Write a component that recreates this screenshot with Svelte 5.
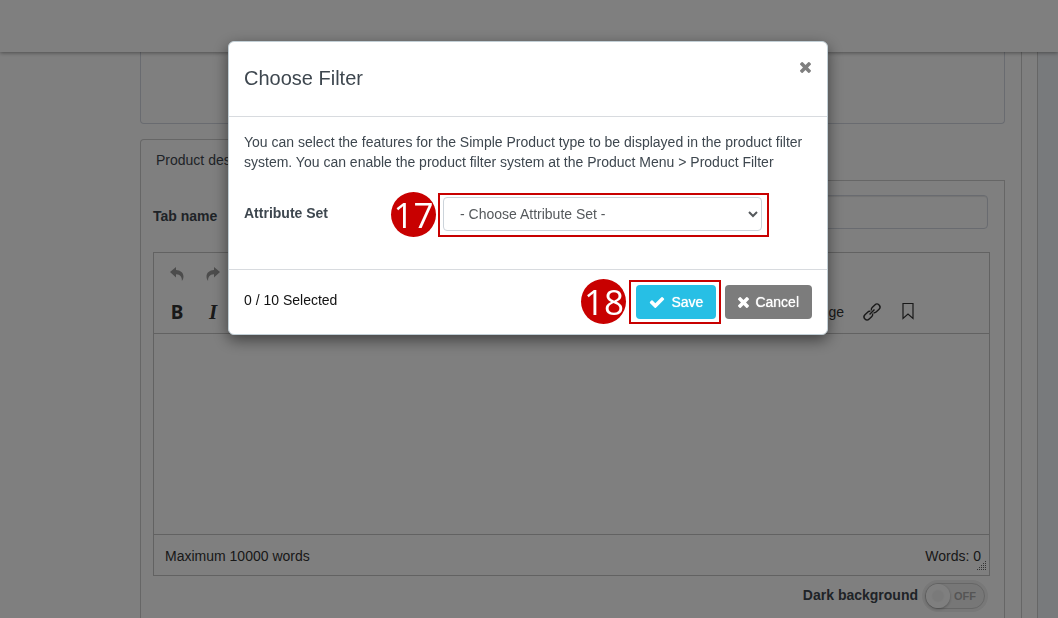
<script>
  let attributeSet = $state('');
  let tabName = $state('');
  let description = $state('');
  let dark = $state(false);
  let selected = $state(0);
  const limit = 10;
  const maxWords = 10000;
  const words = $derived(description.trim() ? description.trim().split(/\s+/).length : 0);
</script>

{#snippet times()}
  <svg class="times" viewBox="302 366 1188 1188" aria-hidden="true"><path fill="currentColor" d="M1490 1322q0 40-28 68l-136 136q-28 28-68 28t-68-28l-294-294-294 294q-28 28-68 28t-68-28l-136-136q-28-28-28-68t28-68l294-294-294-294q-28-28-28-68t28-68l136-136q28-28 68-28t68 28l294 294 294-294q28-28 68-28t68 28l136 136q28 28 28 68t-28 68l-294 294 294 294q28 28 28 68z"/></svg>
{/snippet}

{#snippet turn()}
  <path fill="currentColor" d="M0 5L6 0v3c4.500.2 7.500 2.700 7.500 6.500 0 1.800-.6 3.300-1.600 4.500C12 10 10.500 7.500 6 7.300V10.500z"/>
{/snippet}

<div class="page">
  <header class="topbar"></header>
  <main class="sheet">
    <div class="content">
      <section class="summary"></section>
      <nav class="tabs"><button class="tab">Product des</button></nav>
      <section class="panel">
        <div class="field">
          <label for="tab-name">Tab name</label>
          <input id="tab-name" type="text" bind:value={tabName} />
        </div>
        <div class="editor">
          <div class="toolbar">
            <div class="tools history">
              <button aria-label="Undo"><svg width="14" height="14" viewBox="0 0 14 14">{@render turn()}</svg></button>
              <button aria-label="Redo"><svg width="14" height="14" viewBox="0 0 14 14"><g transform="matrix(-1 0 0 1 14 0)">{@render turn()}</g></svg></button>
            </div>
            <div class="tools">
              <button class="bold">B</button>
              <button class="italic">I</button>
              <button class="image">ge</button>
              <button aria-label="Link">
                <svg width="18" height="18" viewBox="0 0 18 18" fill="none" stroke="currentColor" stroke-width="1.400">
                  <g transform="rotate(-45 9 9)"><path d="M8.300 7.500A2.800 2.800 0 0 0 5.800 6H2a3 3 0 0 0 0 6h3.800a2.800 2.800 0 0 0 2.500-1.500M9.700 7.500A2.800 2.800 0 0 1 12.200 6H16a3 3 0 0 1 0 6h-3.800a2.800 2.800 0 0 1-2.500-1.500M5.500 9h7"/></g>
                </svg>
              </button>
              <button aria-label="Anchor">
                <svg width="18" height="18" viewBox="0 0 18 18" fill="none" stroke="currentColor" stroke-width="1.200"><path d="M4 .5h10v15l-5-4.500-5 4.500z"/></svg>
              </button>
            </div>
          </div>
          <textarea aria-label="Description" bind:value={description}></textarea>
          <div class="status">
            <span>Maximum {maxWords} words</span>
            <span>Words: {words}</span>
            <svg class="grip" width="10" height="10" viewBox="0 0 10 10" aria-hidden="true" fill="#666">
              {#each [0, 1, 2, 3, 4] as row}
                {#each [0, 1, 2, 3, 4] as col}
                  {#if row + col >= 4}<rect x={col * 2} y={row * 2} width="1" height="1" />{/if}
                {/each}
              {/each}
            </svg>
          </div>
        </div>
        <div class="background-option">
          <label for="dark">Dark background</label>
          <span class="switch">
            <input id="dark" type="checkbox" role="switch" bind:checked={dark} />
            <span class="track"><span class="knob"></span>{dark ? 'ON' : 'OFF'}</span>
          </span>
        </div>
      </section>
    </div>
  </main>
</div>

<div class="backdrop">
  <div class="modal" role="dialog" aria-modal="true" aria-labelledby="dialog-title">
    <div class="modal-header">
      <h4 id="dialog-title">Choose Filter</h4>
      <button class="close" aria-label="Close">{@render times()}</button>
    </div>
    <div class="modal-body">
      <p>You can select the features for the Simple Product type to be displayed in the product filter system. You can enable the product filter system at the Product Menu &gt; Product Filter</p>
      <div class="row">
        <label for="attribute-set">Attribute Set</label>
        <div class="marked select-mark">
          <select id="attribute-set" bind:value={attributeSet}>
            <option value="">- Choose Attribute Set -</option>
          </select>
          <span class="step">17</span>
        </div>
      </div>
    </div>
    <div class="modal-footer">
      <span class="count">{selected} / {limit} Selected</span>
      <div class="marked save-mark">
        <button class="btn save">
          <svg width="16" height="11" viewBox="121 334 1550 1188" aria-hidden="true"><path fill="currentColor" d="M1671 566q0 40-28 68l-724 724-136 136q-28 28-68 28t-68-28l-136-136-362-362q-28-28-28-68t28-68l136-136q28-28 68-28t68 28l294 295 656-657q28-28 68-28t68 28l136 136q28 28 28 68z"/></svg>
          Save
        </button>
        <span class="step">18</span>
      </div>
      <button class="btn cancel">{@render times()}Cancel</button>
    </div>
  </div>
</div>

<style>
  :global(body) {
    margin: 0;
    overflow: hidden;
    background: #f1f4f8;
    color: #3e474f;
    font: 14px/20px "Liberation Sans", Arial, sans-serif;
  }
  * { box-sizing: border-box; }
  button, input, select, textarea { font: inherit; color: inherit; }
  svg { display: block; overflow: visible; }

  .page { display: flex; flex-direction: column; min-height: 100vh; }
  .topbar {
    height: 52px;
    background: #fff;
    box-shadow: 0 1px 4px rgba(0, 0, 0, 0.4);
    z-index: 1;
  }
  .sheet {
    flex: 1;
    margin-right: 20px;
    padding-right: 15px;
    background: #fff;
    border-right: 1px solid #ccc;
  }
  .content {
    height: 100%;
    padding: 0 16px 0 140px;
    border-right: 1px solid #ccc;
  }
  .summary {
    height: 72px;
    border: 1px solid #d2d7e0;
    border-top: 0;
    border-radius: 0 0 4px 4px;
  }
  .tabs { display: flex; margin-top: 15px; }
  .tab {
    width: 180px;
    height: 42px;
    margin-bottom: -1px;
    padding: 0 15px 2px;
    text-align: left;
    background: #fff;
    border: 1px solid #ccc;
    border-bottom: 0;
    border-radius: 4px 4px 0 0;
  }
  .panel { padding: 14px 14px 20px 12px; border: 1px solid #ccc; }
  .field { display: flex; align-items: center; padding-right: 2px; }
  .field label { width: 200px; padding-top: 8px; }
  .field label, .background-option label { font-weight: bold; }
  .field input {
    flex: 1;
    height: 34px;
    border: 1px solid #d2d7e0;
    border-radius: 4px;
    background: #fff;
    box-shadow: inset 0 1px 1px rgba(0, 0, 0, 0.1);
  }
  .editor { margin-top: 23px; border: 1px solid #c4c4c4; color: #333; }
  .toolbar { height: 81px; padding: 2px 5px; border-bottom: 1px solid #c4c4c4; }
  .tools { display: flex; align-items: center; height: 38px; }
  .tools button {
    display: flex;
    align-items: center;
    justify-content: center;
    width: 36px;
    height: 36px;
    padding: 0;
    background: none;
    border: 0;
  }
  .history { color: #999; }
  .tools .bold { font: bold 19px "Noto Sans", sans-serif; }
  .tools .italic { font: italic bold 21px "Liberation Serif", serif; }
  .tools .image { width: auto; margin-left: auto; padding-right: 10px; }
  .tools .image ~ button:last-child { margin-right: 58px; }
  textarea { display: block; width: 100%; height: 200px; padding: 10px; border: 0; resize: none; }
  .status {
    position: relative;
    display: flex;
    justify-content: space-between;
    padding: 11px 8px 9px 11px;
    border-top: 1px solid #c4c4c4;
  }
  .grip { position: absolute; right: 2px; bottom: 4px; }
  .background-option {
    display: flex;
    align-items: center;
    justify-content: flex-end;
    gap: 6px;
    margin-top: 6px;
    padding-right: 4px;
  }
  .background-option label { padding-bottom: 2px; }
  .switch {
    position: relative;
    padding: 1px;
    border-radius: 16px;
    background: #f0f0f0;
    box-shadow: 0 0 0 2px #f0f0f0;
  }
  .switch input { position: absolute; inset: 0; width: 100%; height: 100%; margin: 0; opacity: 0; }
  .track {
    display: flex;
    align-items: center;
    gap: 4px;
    width: 60px;
    height: 26px;
    border: 1px solid #ccc;
    border-radius: 13px;
    background: #efefef;
    color: #aaa;
    font-size: 11px;
    font-weight: bold;
  }
  .knob {
    width: 24px;
    height: 24px;
    border-radius: 50%;
    background: radial-gradient(circle, #f4f4f4 0 5px, #fff 7px);
    box-shadow: 0 1px 3px rgba(0, 0, 0, 0.3);
  }

  .backdrop {
    position: fixed;
    inset: 0;
    z-index: 2;
    display: flex;
    justify-content: center;
    align-items: flex-start;
    padding: 41px 2px 0 0;
    background: rgba(0, 0, 0, 0.5);
  }
  .modal {
    width: 600px;
    max-width: 100%;
    background: #fff;
    border: 1px solid #c2cfd6;
    border-radius: 6px;
    box-shadow: 0 5px 15px rgba(0, 0, 0, 0.5);
  }
  .modal-header {
    display: flex;
    justify-content: space-between;
    align-items: flex-start;
    padding: 19px 15px 21px;
    border-bottom: 1px solid #d8dbdf;
  }
  h4 { margin: 0; font-size: 20px; font-weight: normal; line-height: 34px; }
  .close { padding: 1px; background: none; border: 0; color: #7f7f7f; }
  .times { width: 11px; height: 11px; }
  .modal-body { padding: 15px 15px 38px; }
  p { margin: 0 0 25px; }
  .row { display: grid; grid-template-columns: 199fr 319fr 50fr; align-items: center; }
  .row label { padding-bottom: 2px; font-weight: bold; }
  select {
    width: 100%;
    height: 34px;
    padding: 6px 12px;
    background: #fff;
    border: 1px solid #ccd3da;
    border-radius: 4px;
    color: #55595c;
  }
  .marked { position: relative; }
  .marked::after { content: ''; position: absolute; border: 2px solid #c80000; pointer-events: none; }
  .select-mark::after { inset: -4px -7px -6px -5px; }
  .save-mark::after { inset: -5px -5px -5px -7px; }
  .step {
    position: absolute;
    top: -5px;
    width: 45px;
    height: 45px;
    border-radius: 50%;
    background: #c80000;
    color: #fff;
    font: 35px/45px "Open Sans", sans-serif;
    text-align: center;
  }
  .select-mark .step { left: -52px; }
  .save-mark .step { top: -6px; left: -55px; }
  .modal-footer {
    display: flex;
    align-items: center;
    gap: 9px;
    padding: 15px;
    border-top: 1px solid #d8dbdf;
  }
  .count { margin-right: auto; padding-bottom: 4px; color: #111; }
  .btn {
    display: flex;
    align-items: center;
    gap: 6px;
    height: 34px;
    padding: 0 13px;
    border: 0;
    border-radius: 4px;
    color: #fff;
    text-shadow: 0 0 1px #fff;
  }
  .save { background: #27bfe5; }
  .cancel { background: #7c7c7c; }
</style>
